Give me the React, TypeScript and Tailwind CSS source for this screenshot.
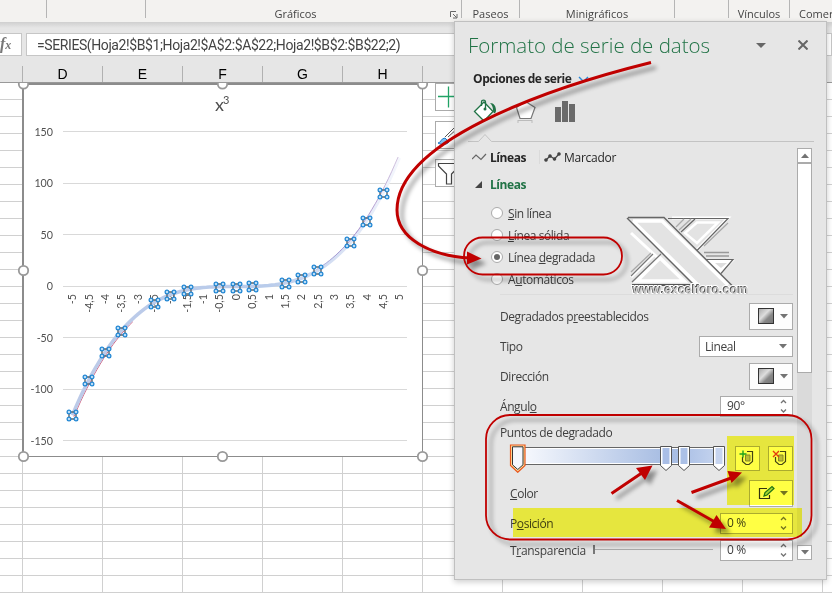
import type { ReactNode } from 'react';
import clsx from 'clsx';

const columns = ['D', 'E', 'F', 'G', 'H'];
const rows = Array.from({ length: 30 }, (_, i) => i);
const cells = Array.from({ length: 11 }, (_, i) => i);

const yTicks = [150, 100, 50, 0, -50, -100, -150];
const xTicks = Array.from({ length: 21 }, (_, i) => -5 + i * 0.5);
const markers = [-5, -4.5, -4, -3.5, -2.5, -2, -1.5, -0.5, 0, 0.5, 1.5, 2, 2.5, 3.5, 4, 4.5];

// chart coordinates, relative to the top left corner of the chart object
const px = (x: number) => 213.8 + x * 32.7;
const py = (y: number) => 203.5 - y * 1.03;

const plot = (from: number, to: number) =>
  Array.from({ length: Math.round((to - from) * 10) + 1 }, (_, i) => {
    const x = from + i * 0.1;
    return `${i ? 'L' : 'M'}${px(x).toFixed(1)} ${py(x ** 3).toFixed(1)}`;
  }).join(' ');

const ribbon = [
  { width: 'w-[47px]', label: '' },
  { width: 'w-[99px]', label: '' },
  { width: 'w-[316px]', label: 'Gráficos' },
  { width: 'w-[58px]', label: 'Paseos' },
  { width: 'w-[155px]', label: 'Minigráficos' },
  { width: 'w-[54px]', label: '' },
  { width: 'w-[61px]', label: 'Vínculos' },
  { width: 'w-[42px]', label: 'Comer' },
];

function Ribbon() {
  return (
    <div className="flex h-[22px] shrink-0 bg-[#f3f2f0] text-[11px] leading-[14px] text-[#444]">
      {ribbon.map((group, i) => (
        <div key={i} className={clsx('relative flex shrink-0 pt-[7px]', group.width, i === 7 ? 'pl-[9px]' : 'justify-center pr-px')}>
          <span className={clsx('whitespace-nowrap', i === 2 && '-translate-x-2')}>{group.label}</span>
          {i < 7 && <span className="absolute right-0 top-0 h-[18px] w-px bg-[#b5b5b5]" />}
          {i === 2 && (
            <svg className="absolute right-[4px] top-[11px]" width="8" height="8" fill="none" stroke="#666">
              <path d="M.5 6V.5H6M3 3l3.5 3.5M7 3v4H3" />
            </svg>
          )}
        </div>
      ))}
    </div>
  );
}

function FormulaBar() {
  return (
    <div className="flex h-[44px] shrink-0 gap-[4px] bg-[linear-gradient(#cfcfcf,#e6e6e6_6px)] pt-[11px]">
      <div className="h-[23px] w-[22px] shrink-0 border border-l-0 border-[#c6c6c6] bg-white font-['Liberation_Serif',serif] text-[16px] leading-[20px] font-bold text-[#777] italic">
        <span>f</span>
        <span className="text-[12px]">x</span>
      </div>
      <div className="h-[23px] flex-1 border border-[#c6c6c6] bg-white pl-[10px] font-['Roboto',sans-serif] text-[14px] leading-[22px] tracking-[-0.4px] whitespace-nowrap text-[#444]">
        =SERIES(Hoja2!$B$1;Hoja2!$A$2:$A$22;Hoja2!$B$2:$B$22;2)
      </div>
    </div>
  );
}

function ColumnHeader() {
  return (
    <div className="flex h-[17px] shrink-0 border-b border-[#999] bg-[#e6e6e6] font-['Liberation_Sans',sans-serif] text-[14px] leading-[17px] text-black">
      <div className="w-[23px] border-r border-[#b1b1b1]" />
      {columns.map((name) => (
        <div key={name} className="w-[80px] border-r border-[#b1b1b1] text-center">
          {name}
        </div>
      ))}
    </div>
  );
}

function Chart() {
  return (
    <svg className="absolute top-0 left-[22px] overflow-visible" width="401" height="375">
      <defs>
        <linearGradient id="serie" gradientUnits="userSpaceOnUse" x1="50" x2="378" y1="0" y2="0">
          <stop offset="0" stopColor="#bccae8" />
          <stop offset="0.6" stopColor="#b9cceb" />
          <stop offset="0.8" stopColor="#d5dff3" />
          <stop offset="1" stopColor="#f5f7fd" />
        </linearGradient>
        <linearGradient id="edge" gradientUnits="userSpaceOnUse" x1="290" x2="378" y1="0" y2="0">
          <stop offset="0" stopColor="#b9cceb" />
          <stop offset="0.45" stopColor="#a184c7" />
          <stop offset="1" stopColor="#d4c5df" />
        </linearGradient>
      </defs>
      <rect x="1" y="0" width="400" height="374" fill="#fff" />
      <path d="M0 1h401" stroke="#8c8c8c" strokeWidth="2" />
      <path d="M1 0v374" stroke="#8c8c8c" strokeWidth="2" />
      <path d="M400.5 0v374M0 373.5h401" stroke="#8c8c8c" />
      <g fontFamily="Lato, sans-serif" fill="#505050">
        <text x="193" y="27.500" fontSize="18">x</text>
        <text x="201" y="21" fontSize="11">3</text>
        {yTicks.map((tick) => (
          <g key={tick}>
            <path d={`M41 ${Math.round(py(tick)) - 0.5}h344`} stroke="#d9d9d9" />
            <text x="31" y={py(tick) + 3.5} textAnchor="end" fontSize="10.7">{tick}</text>
          </g>
        ))}
        {xTicks.map((tick) => (
          <text key={tick} textAnchor="end" fontSize="10.7" transform={`translate(${px(tick) + 4} 211) rotate(-90)`}>
            {String(tick).replace('.', ',')}
          </text>
        ))}
      </g>
      <path d={plot(-5, -3.2)} fill="none" stroke="#d0607f" strokeWidth="1" transform="translate(1.6 1.4)" />
      <path d={plot(-5, 5)} fill="none" stroke="url(#serie)" strokeWidth="3.6" />
      <path d={plot(2.5, 5)} fill="none" stroke="url(#edge)" strokeWidth="1" transform="translate(-1.2 -.8)" />
      {markers.map((x) => (
        <g key={x} transform={`translate(${Math.round(px(x) - 0.2) + 0.5} ${Math.round(py(x ** 3)) + 0.5})`}>
          <path d="M-3.5-3.5h7v7h-7z" fill="none" stroke="#666" strokeWidth="1.4" />
          {[[-3.5, -3.5], [3.5, -3.5], [-3.5, 3.5], [3.5, 3.5]].map(([cx, cy]) => (
            <circle key={`${cx}${cy}`} cx={cx} cy={cy} r="1.9" fill="#b9dcf7" stroke="#1f86d3" strokeWidth="1.2" />
          ))}
        </g>
      ))}
      {[[1.5, 1], [200.5, 1], [400.5, 1], [1.5, 187.5], [400.5, 187.5], [1.5, 373.5], [200.5, 373.5], [400.5, 373.5]].map(([cx, cy]) => (
        <circle key={`${cx}-${cy}`} cx={cx} cy={cy} r="4.7" fill="#fff" stroke="#999" strokeWidth="1.8" />
      ))}
    </svg>
  );
}

function ChartButtons() {
  const box = 'h-[28px] w-[28px] border border-[#ababab] bg-white';
  return (
    <div className="absolute top-0 left-[435px] flex flex-col gap-[10px]">
      <div className={box}>
        <svg width="26" height="26" stroke="#21a366" strokeWidth="1.3">
          <path d="M2 12.5h22M12.500 2.5v21" />
        </svg>
      </div>
      <div className={box}>
        <svg width="26" height="26" fill="none" stroke="#555">
          <path d="M9 15 21 3l4 4-11 11M12 15l10-9" />
          <path d="M2 21c3 0 3-5 7-5l4 4c-2 3-8 3-11 1z" fill="#83beec" stroke="#1e78c8" />
        </svg>
      </div>
      <div className={box}>
        <svg width="26" height="26" fill="none" stroke="#444" strokeWidth="1.2">
          <path d="M2.5 3.5h21v2.5l-8 8v10h-5V14l-8-8z" />
        </svg>
      </div>
    </div>
  );
}

function Sheet() {
  return (
    <div className="relative flex-1 overflow-hidden bg-white">
      {rows.map((row) => (
        <div key={row} className="flex h-[17px] border-b border-[#d0d0d0]">
          <div className="w-[23px] shrink-0 border-r border-[#d0d0d0]" />
          {cells.map((cell) => (
            <div key={cell} className={clsx('w-[80px] shrink-0 border-r', cell > 4 && row < 26 ? 'border-transparent' : 'border-[#d0d0d0]')} />
          ))}
        </div>
      ))}
      <Chart />
      <ChartButtons />
    </div>
  );
}

function Caret({ className }: { className?: string }) {
  return (
    <svg className={className} width="8" height="5" fill="#737373">
      <path d="M0 0h8L4 4.500z" />
    </svg>
  );
}

function Spinner({ value }: { value: string }) {
  return (
    <div className="flex h-[21px] w-[73px] shrink-0 items-center justify-between border border-[#ababab] bg-white pr-[5px] pl-[6px]">
      <span>{value}</span>
      <svg width="7" height="16" fill="none" stroke="#737373" strokeWidth="1.3">
        <path d="M1 5 3.5 2.500 6 5M1 11.5 3.5 14 6 11.5" />
      </svg>
    </div>
  );
}

function GradientButton() {
  return (
    <div className="flex h-[27px] w-[44px] items-center gap-[6px] border border-[#ababab] bg-[#fdfdfd] pl-[8px]">
      <span className="h-[16px] w-[16px] border border-[#333] bg-[linear-gradient(135deg,#aaa_0,#ddd_40%,#bbb_50%,#888_65%,#777)]" />
      <Caret />
    </div>
  );
}

function Field({ label, className, children }: { label: ReactNode; className: string; children?: ReactNode }) {
  return (
    <div className={clsx('flex shrink-0 items-center justify-between', className)}>
      <span className="pt-[2px]">{label}</span>
      {children}
    </div>
  );
}

function Radio({ label, checked }: { label: ReactNode; checked?: boolean }) {
  return (
    <div className="flex h-[22px] shrink-0 items-center gap-[5px] pl-[22px]">
      <span className="flex h-[12px] w-[12px] items-center justify-center rounded-full border border-[#ababab] bg-white">
        {checked && <span className="h-[6px] w-[6px] rounded-full bg-[#666]" />}
      </span>
      <span className="pt-[2px]">{label}</span>
    </div>
  );
}

function Logo() {
  return (
    <svg className="absolute top-[193px] left-[171px]" width="126" height="84" fill="none">
      {/* right arm */}
      <path d="M46 3h56L71 35" fill="#e3e3e3" stroke="#fff" strokeWidth="3" />
      <path d="M71 7.500h21L71 28l-12-10z" fill="#e3e3e3" stroke="#fff" strokeWidth="2.500" />
      <path d="M42 3.500h60L71 35.500M55 17 69 4" stroke="#666" strokeWidth="1.200" />
      <path d="M53 15 65 4M50 12l8-8M78 31l24-23" stroke="#aaa" strokeWidth="1.300" />
      {/* left foot */}
      <path d="m5 18 26 24M5 62l24-23" stroke="#fff" strokeWidth="3" />
      <path d="M11 66 34 43l24 23z" fill="#e3e3e3" stroke="#fff" strokeWidth="3.500" />
      <path d="m6 67 29-28M5 61l22-22" stroke="#777" strokeWidth="1.200" />
      <path d="M5 57 25 38" stroke="#aaa" strokeWidth="1.300" />
      <path d="M6 70h58" stroke="#555" strokeWidth="2" />
      {/* right foot */}
      <path d="M82 46h24L95 57z" fill="#fff" stroke="#fff" strokeWidth="2.500" />
      <path d="M89 48h12l-6 5z" fill="#ddd" />
      <path d="M78 37.500h25M80 41h23" stroke="#999" strokeWidth="1.500" />
      <path d="M80 44.500h27L95 58.500" stroke="#666" strokeWidth="1.200" />
      {/* main stroke of the X */}
      <path d="M2 3h36l68 68H69z" fill="#e3e3e3" />
      <path d="m7 6 64 63M7 6h29l66 64" stroke="#fff" strokeWidth="3.500" />
      <path d="m1 3 67 67M2 2.500h36l68 68" stroke="#666" strokeWidth="1.400" />
      <g fontFamily="Liberation Sans, sans-serif" fontSize="12" fontWeight="bold">
        <text x="6" y="78" fill="#fff" stroke="#fff" strokeWidth="2" textLength="115">www.excelforo.com</text>
        <text x="6" y="78" fill="#555" textLength="115">www.excelforo.com</text>
        <text x="7" y="79" fill="#ccc" textLength="115">www.excelforo.com</text>
      </g>
    </svg>
  );
}

function GradientStops() {
  return (
    <svg className="mt-px -ml-[2px] shrink-0" width="220" height="30">
      <defs>
        <linearGradient id="bar">
          <stop offset="0" stopColor="#f6f8fd" />
          <stop offset="0.72" stopColor="#a6bce2" />
          <stop offset="0.8" stopColor="#abc0e6" />
          <stop offset="1" stopColor="#c8d6ef" />
        </linearGradient>
      </defs>
      <rect x="8" y="4" width="206" height="17" fill="#fff" />
      <rect x="16" y="6" width="198" height="14" fill="url(#bar)" />
      <path d="M16 4.5h198M16 21.5h198" stroke="#666" />
      <path d="M2.5 2h14.500v20.500L9.750 29.300 2.500 22.500z" fill="#ffe0a0" stroke="#e8561c" strokeWidth="1.2" />
      <path d="M4.500 3.800h10.500v18L9.750 26.500 4.500 21.800z" fill="#f5f7fd" stroke="#333" strokeWidth="1" />
      {[[158, '#a9bee6'], [176, '#abc0e6'], [211, '#c6d4ef']].map(([x, color]) => (
        <g key={x} transform={`translate(${x} 0)`}>
          <path d="M-5.5 3.5h11v19L0 27.5l-5.5-5z" fill="#fff" stroke="#555" />
          <path d="M-3.5 5h7v16h-7z" fill={color as string} />
        </g>
      ))}
    </svg>
  );
}

function StopButton({ remove }: { remove?: boolean }) {
  return (
    <div className="h-[25px] w-[25px] border border-[#ababab] bg-white">
      <svg width="23" height="23" fill="none">
        <path d="M11 4.500h5.500v10L13 17.500h-3L6.500 14.500V10" stroke="#444" strokeWidth="1.200" />
        <path d="M9.500 8h4.500v6H9.500z" fill="#bbb" stroke="#888" />
        {remove ? (
          <path d="m4 4 6 6M10 4l-6 6" stroke="#e33d32" strokeWidth="1.4" />
        ) : (
          <path d="M3.500 7h7M7 3.5v7" stroke="#21a366" strokeWidth="1.4" />
        )}
      </svg>
    </div>
  );
}

function PanelTabs() {
  return (
    <svg className="ml-[13px] shrink-0" width="346" height="50" fill="none">
      <path d="M6.5 19.500 16 10l9 9.500-9 9.500z" fill="#fff" stroke="#217346" strokeWidth="1.3" />
      <path d="M13.5 14V10c0-2.5 4-2.5 4 0V16" stroke="#217346" strokeWidth="1.3" />
      <circle cx="17" cy="17" r="1.5" fill="#217346" />
      <path d="M22 11c4 0 6 3 6 8-1 4-3 2-3-1s-1-5-3-7z" fill="#217346" />
      <path d="m57.5 9.5 9.5 6-4 11H52L48.500 15.500z" fill="#fff" stroke="#777" strokeWidth="1.2" />
      <path d="M50 28v3M64 28v3M50 28.500h14" stroke="#bbb" />
      <path d="M87 15h6v15h-6zM94 9h6v21h-6zM101 12h6v18h-6z" fill="#6a6a6a" />
      <path d="M0 49.500h10.500l6.500-7 6.500 7H346" stroke="#c3c3c3" />
    </svg>
  );
}

function Panel() {
  return (
    <div className="absolute top-[21px] left-[454px] flex h-[559px] w-[373px] flex-col border border-[#c0c0c0] bg-[#e6e6e6] text-[12px] leading-[16px] tracking-[-0.42px] text-[#404040] shadow-[0_2px_6px_rgba(0,0,0,0.2)]">
      <div className="flex h-[44px] shrink-0 items-center pt-[2px] pl-[13px]">
        <h1 className="w-[288px] text-[20.5px] font-light tracking-[-0.02px] whitespace-nowrap text-[#217346]">Formato de serie de datos</h1>
        <svg width="10" height="5" fill="#666">
          <path d="M0 0h10L5 5z" />
        </svg>
        <svg className="ml-[32px]" width="10" height="10" stroke="#666" strokeWidth="2">
          <path d="m.5.500 9 9M9.500.500l-9 9" />
        </svg>
      </div>
      <div className="flex h-[26px] shrink-0 items-center gap-[7px] pl-[18px] font-bold text-[#262626]">
        <span className="w-[98px] whitespace-nowrap">Opciones de serie</span>
        <svg width="11" height="7" fill="none" stroke="#2b88d8" strokeWidth="1.4">
          <path d="m1 1 4.500 4.500L10 1" />
        </svg>
      </div>
      <PanelTabs />
      <div className="flex pt-[6px] pl-[17px]">
        <div className="flex h-[412px] w-[321px] flex-col">
          <div className="flex h-[18px] shrink-0 items-center text-[#262626]">
            <svg width="15" height="10" fill="none" stroke="#666" strokeWidth="1.2">
              <path d="m0 7 4-4 5 4.500L14 2" />
            </svg>
            <b className="ml-[3px] w-[49px] pt-[2px]">Líneas</b>
            <span className="h-[14px] w-px bg-[#dadada]" />
            <svg className="ml-[4px]" width="17" height="11" fill="#444" stroke="#444" strokeWidth="1.2">
              <path d="m2 8 4-4 4.500 3 4.500-5" fill="none" />
              <circle cx="2" cy="8" r="1.200" />
              <circle cx="6" cy="4" r="1.200" />
              <circle cx="10.500" cy="7" r="1.200" />
              <circle cx="15" cy="2" r="1.200" />
            </svg>
            <span className="ml-[3px] pt-[2px] tracking-[-0.25px]">Marcador</span>
          </div>
          <div className="flex h-[36px] shrink-0 items-center gap-[8px] pl-[3px] font-bold text-[#217346]">
            <svg width="7" height="7" fill="#444">
              <path d="M7 0v7H0z" />
            </svg>
            <span className="pt-[2px]">Líneas</span>
          </div>
          <div className="-ml-[3px] flex flex-col">
            <Radio label={<><u>S</u>in línea</>} />
            <Radio label={<><u>L</u>ínea sólida</>} />
            <Radio checked label={<>Línea <u>d</u>egradada</>} />
            <Radio label={<>A<u>u</u>tomáticos</>} />
          </div>
          <div className="ml-[28px] flex flex-col">
            <div className="mb-[7px] h-[5px] shrink-0 border-b border-[#dcdcdc]" />
            <Field label={<>Degradados p<u>r</u>eestablecidos</>} className="h-[28px]">
              <GradientButton />
            </Field>
            <Field label="Tipo" className="h-[32px]">
              <div className="flex h-[21px] w-[94px] items-center justify-between border border-[#ababab] bg-white pr-[5px] pl-[5px] pt-px">
                Lineal
                <Caret />
              </div>
            </Field>
            <Field label="Dirección" className="h-[28px]">
              <GradientButton />
            </Field>
            <Field label={<>Ángul<u>o</u></>} className="h-[32px]">
              <Spinner value="90°" />
            </Field>
            <Field label="Puntos de degradado" className="h-[20px]" />
            <div className="flex h-[36px] shrink-0 justify-between pl-[10px]">
              <GradientStops />
              <div className="flex gap-[8px] pt-[4px]">
                <StopButton />
                <StopButton remove />
              </div>
            </div>
            <Field label={<><u>C</u>olor</>} className="h-[30px] pl-[10px]">
              <div className="flex h-[27px] w-[44px] items-center gap-[4px] border border-[#ababab] bg-white pl-[8px]">
                <svg width="18" height="17" fill="none">
                  <path d="M9 3.500H1.500v10h10V10" stroke="#333" strokeWidth="1.2" />
                  <path d="m6 11 1-3.500 7-6 2 2-7 6.500z" fill="#a6d6b4" stroke="#217346" strokeWidth="1.200" />
                </svg>
                <Caret />
              </div>
            </Field>
            <Field label={<>P<u>o</u>sición</>} className="h-[30px] pl-[10px]">
              <Spinner value="0 %" />
            </Field>
            <div className="flex h-[24px] shrink-0 items-center pl-[10px]">
              <span className="w-[83px] pt-[2px] tracking-[-0.3px]">T<u>r</u>ansparencia</span>
              <div className="relative mt-[-2px] mr-[7px] h-px w-[120px] bg-[#aaa]">
                <span className="absolute top-[-4px] left-0 h-[9px] w-[2px] bg-[#777]" />
              </div>
              <Spinner value="0 %" />
            </div>
          </div>
        </div>
        <div className="ml-[4px] flex h-[412px] w-[15px] flex-col bg-[#dadada]">
          <div className="flex h-[15px] items-center justify-center border border-[#ababab] bg-white">
            <Caret className="rotate-180" />
          </div>
          <div className="h-[210px] border border-[#ababab] bg-white" />
          <div className="mt-auto flex h-[15px] items-center justify-center border border-[#ababab] bg-white">
            <Caret />
          </div>
        </div>
      </div>
      <Logo />
    </div>
  );
}

// highlighter blocks and red pen marks
function Annotations() {
  return (
    <>
      <div className="absolute top-[436px] left-[727px] h-[69px] w-[67px] bg-[#ffff44] mix-blend-multiply" />
      <div className="absolute top-[508px] left-[513px] h-[29px] w-[289px] bg-[#ffff44] mix-blend-multiply" />
      <svg className="absolute inset-0 drop-shadow-[5px_5px_2px_rgba(0,0,0,0.4)]" width="832" height="593" fill="none" stroke="#c00000">
        <path d="M651 62.500C540 90 397 143 397 210c0 28 33 46 73 48" strokeWidth="3" />
        <rect x="464" y="237.500" width="158" height="37" rx="18.500" strokeWidth="1.800" />
        <rect x="486" y="415" width="325.500" height="124.500" rx="24" strokeWidth="1.800" />
        <path d="m611.500 493.500 31-21M691.500 492.500l41-15M677 500.500l37 21" strokeWidth="3" />
        <g fill="#c00000" stroke="none">
          <path d="m481.500 258.500-14.500 6v-13z" />
          <path d="m652.500 465.500-7.500 14.500-9-12z" />
          <path d="m742 472.500-10.500 10.500-4-12z" />
          <path d="m726 529-17-1.500 7.500-12.500z" />
        </g>
      </svg>
    </>
  );
}

export default function App() {
  return (
    <main className="relative flex h-[593px] w-[832px] flex-col overflow-hidden bg-white font-['Open_Sans',sans-serif]">
      <Ribbon />
      <FormulaBar />
      <ColumnHeader />
      <Sheet />
      <Panel />
      <Annotations />
    </main>
  );
}
